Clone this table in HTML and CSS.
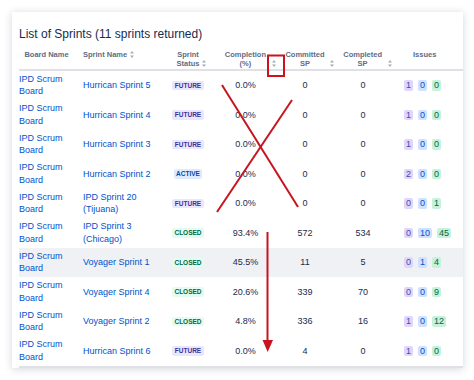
FILE: index.html
```html
<!DOCTYPE html>
<html>
<head>
<meta charset="utf-8">
<link rel="stylesheet" href="styles.css">
</head>
<body>
<div class="page">
  <div class="card">
    <h2 class="title">List of Sprints (11 sprints returned)</h2>
    <table class="sprints">
      <colgroup>
        <col class="c-board"><col class="c-name"><col class="c-status"><col class="c-comp"><col class="c-commit"><col class="c-done"><col class="c-issues">
      </colgroup>
      <thead>
        <tr>
          <th class="h-board">Board Name</th>
          <th class="h-name"><div class="hl"><span>Sprint Name</span><svg class="sort" width="4" height="7" viewBox="0 0 4 7"><path d="M2 0L4 2.6H0ZM0 4.4H4L2 7Z"/></svg></div></th>
          <th><div class="hc"><span class="ht">Sprint<br>Status</span><svg class="sort s-status" width="4" height="7" viewBox="0 0 4 7"><path d="M2 0L4 2.6H0ZM0 4.4H4L2 7Z"/></svg></div></th>
          <th><div class="hc"><span class="ht">Completion<br>(%)</span><svg class="sort s-comp" width="4" height="7" viewBox="0 0 4 7"><path d="M2 0L4 2.6H0ZM0 4.4H4L2 7Z"/></svg></div></th>
          <th><div class="hc"><span class="ht">Committed<br>SP</span><svg class="sort s-commit" width="4" height="7" viewBox="0 0 4 7"><path d="M2 0L4 2.6H0ZM0 4.4H4L2 7Z"/></svg></div></th>
          <th><div class="hc"><span class="ht">Completed<br>SP</span><svg class="sort s-done" width="4" height="7" viewBox="0 0 4 7"><path d="M2 0L4 2.6H0ZM0 4.4H4L2 7Z"/></svg></div></th>
          <th class="h-issues">Issues</th>
        </tr>
      </thead>
      <tbody>
        <tr><td class="lnk">IPD Scrum<br>Board</td><td class="lnk name">Hurrican Sprint 5</td><td class="ctr"><span class="loz future">Future</span></td><td class="ctr">0.0%</td><td class="ctr">0</td><td class="ctr">0</td><td class="iss"><span class="b p">1</span><span class="b bl">0</span><span class="b g">0</span></td></tr>
        <tr><td class="lnk">IPD Scrum<br>Board</td><td class="lnk name">Hurrican Sprint 4</td><td class="ctr"><span class="loz future">Future</span></td><td class="ctr">0.0%</td><td class="ctr">0</td><td class="ctr">0</td><td class="iss"><span class="b p">1</span><span class="b bl">0</span><span class="b g">0</span></td></tr>
        <tr><td class="lnk">IPD Scrum<br>Board</td><td class="lnk name">Hurrican Sprint 3</td><td class="ctr"><span class="loz future">Future</span></td><td class="ctr">0.0%</td><td class="ctr">0</td><td class="ctr">0</td><td class="iss"><span class="b p">1</span><span class="b bl">0</span><span class="b g">0</span></td></tr>
        <tr><td class="lnk">IPD Scrum<br>Board</td><td class="lnk name">Hurrican Sprint 2</td><td class="ctr"><span class="loz active">Active</span></td><td class="ctr">0.0%</td><td class="ctr">0</td><td class="ctr">0</td><td class="iss"><span class="b p">2</span><span class="b bl">0</span><span class="b g">0</span></td></tr>
        <tr><td class="lnk">IPD Scrum<br>Board</td><td class="lnk name">IPD Sprint 20<br>(Tijuana)</td><td class="ctr"><span class="loz future">Future</span></td><td class="ctr">0.0%</td><td class="ctr">0</td><td class="ctr">0</td><td class="iss"><span class="b p">0</span><span class="b bl">0</span><span class="b g">1</span></td></tr>
        <tr><td class="lnk">IPD Scrum<br>Board</td><td class="lnk name">IPD Sprint 3<br>(Chicago)</td><td class="ctr"><span class="loz closed">Closed</span></td><td class="ctr">93.4%</td><td class="ctr">572</td><td class="ctr">534</td><td class="iss"><span class="b p">0</span><span class="b bl">10</span><span class="b g">45</span></td></tr>
        <tr class="hover"><td class="lnk">IPD Scrum<br>Board</td><td class="lnk name">Voyager Sprint 1</td><td class="ctr"><span class="loz closed">Closed</span></td><td class="ctr">45.5%</td><td class="ctr">11</td><td class="ctr">5</td><td class="iss"><span class="b p">0</span><span class="b bl">1</span><span class="b g">4</span></td></tr>
        <tr><td class="lnk">IPD Scrum<br>Board</td><td class="lnk name">Voyager Sprint 4</td><td class="ctr"><span class="loz closed">Closed</span></td><td class="ctr">20.6%</td><td class="ctr">339</td><td class="ctr">70</td><td class="iss"><span class="b p">0</span><span class="b bl">0</span><span class="b g">9</span></td></tr>
        <tr><td class="lnk">IPD Scrum<br>Board</td><td class="lnk name">Voyager Sprint 2</td><td class="ctr"><span class="loz closed">Closed</span></td><td class="ctr">4.8%</td><td class="ctr">336</td><td class="ctr">16</td><td class="iss"><span class="b p">1</span><span class="b bl">0</span><span class="b g">12</span></td></tr>
        <tr><td class="lnk">IPD Scrum<br>Board</td><td class="lnk name">Hurrican Sprint 6</td><td class="ctr"><span class="loz future">Future</span></td><td class="ctr">0.0%</td><td class="ctr">4</td><td class="ctr">0</td><td class="iss"><span class="b p">1</span><span class="b bl">0</span><span class="b g">0</span></td></tr>
      </tbody>
    </table>
  </div>
</div>
<svg class="marks" width="474" height="380" viewBox="0 0 474 380">
  <rect x="268" y="55.5" width="16" height="20.5" fill="none" stroke="#c8141e" stroke-width="2"/>
  <line x1="222" y1="85" x2="298" y2="207" stroke="#c8141e" stroke-width="2"/>
  <line x1="292" y1="100" x2="217" y2="212" stroke="#c8141e" stroke-width="2"/>
  <line x1="267.5" y1="232" x2="267.5" y2="342" stroke="#c8141e" stroke-width="2"/>
  <polygon points="262.5,340 273,340 267.7,352" fill="#c8141e"/>
</svg>
</body>
</html>
```

FILE: styles.css
```css
html, body {
  margin: 0;
  background: #ffffff;
}
body {
  width: 474px;
  height: 380px;
  overflow: hidden;
  position: relative;
  font-family: "Liberation Sans", Arial, sans-serif;
  color: #172b4d;
}
.page {
  padding: 12px 11px 0 12px;
}
.card {
  width: 451px;
  height: 356px;
  box-sizing: border-box;
  padding-left: 7px;
  background: #ffffff;
  box-shadow: 0 1px 8px rgba(9, 30, 66, 0.18);
  overflow: hidden;
}
.title {
  margin: 0 0 7.5px;
  padding-top: 15px;
  font-size: 12px;
  line-height: 15px;
  font-weight: 400;
  color: #172b4d;
}
.sprints {
  width: 444px;
  table-layout: fixed;
  border-collapse: collapse;
  border-bottom: 2px solid #dfe1e6;
}
.c-board { width: 60px; }
.c-name { width: 82px; }
.c-status { width: 54px; }
.c-comp { width: 61px; }
.c-commit { width: 58px; }
.c-done { width: 58px; }
.c-issues { width: 71px; }

.sprints th {
  vertical-align: top;
  padding: 0 0 1px;
  font-size: 7.5px;
  line-height: 9px;
  font-weight: 700;
  color: #5e6c84;
  border-bottom: 2px solid #dfe1e6;
}
.h-board {
  text-align: center;
  padding-right: 5px !important;
}
.h-name {
  text-align: left;
  padding-left: 4px !important;
}
.h-issues {
  text-align: left;
  padding-left: 21px !important;
}
.hl {
  display: flex;
  align-items: center;
  gap: 3px;
}
.hc {
  display: grid;
  grid-template-columns: 1fr auto 1fr;
  align-items: end;
}
.ht {
  grid-column: 2;
  text-align: center;
  white-space: nowrap;
}
.sort {
  fill: #a5adba;
  display: block;
}
.hc .sort {
  grid-column: 3;
  justify-self: start;
  margin-bottom: 1px;
}
.s-status { margin-left: 3px; }
.s-comp { margin-left: 6px; }
.s-commit { margin-left: 5px; }
.s-done { margin-left: 6px; }

.sprints td {
  padding: 2.25px 4px;
  font-size: 9px;
  line-height: 12.5px;
  vertical-align: middle;
  color: #172b4d;
}
.sprints td:first-child {
  padding-left: 0;
}
.sprints td.lnk {
  color: #0052cc;
}
.sprints td.ctr {
  text-align: center;
  padding-left: 0;
  padding-right: 0;
}
.sprints td.iss {
  padding-left: 12px;
  white-space: nowrap;
}
.sprints tr.hover td {
  background: #f0f1f4;
}

.loz {
  display: inline-block;
  padding: 0 2.5px;
  border-radius: 2px;
  font-size: 6.5px;
  line-height: 9.5px;
  font-weight: 700;
  text-transform: uppercase;
  vertical-align: middle;
}
.future { background: #eae6ff; color: #403294; }
.active { background: #deebff; color: #0747a6; }
.closed { background: #e3fcef; color: #006644; }

.b {
  display: inline-block;
  padding: 0 2px;
  min-width: 5px;
  text-align: center;
  border-radius: 2px;
  font-size: 9px;
  line-height: 10.5px;
  margin-right: 5px;
  vertical-align: middle;
}
.b.p { background: #dcd7fb; color: #5243aa; }
.b.bl { background: #cfe1ff; color: #0052cc; }
.b.g { background: #c6f1da; color: #006644; }

.marks {
  position: absolute;
  left: 0;
  top: 0;
  pointer-events: none;
}
```
